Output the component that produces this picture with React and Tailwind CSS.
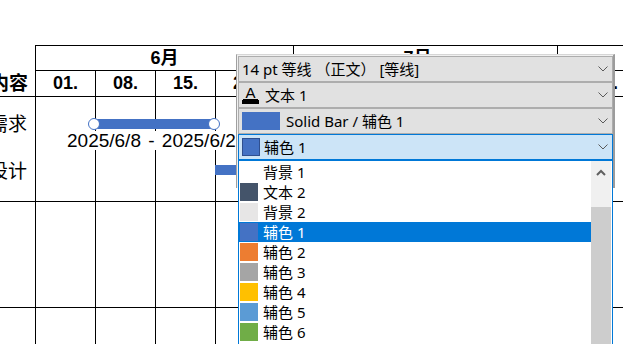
import React from 'react';

const weeks = ['01.', '08.', '15.', '22.', '29.', '06.', '13.', '20.', '27.', '03.'];

const items = [
  { name: '背景 1', c: null },
  { name: '文本 2', c: '#44546a' },
  { name: '背景 2', c: '#e7e6e6' },
  { name: '辅色 1', c: '#4472c4', sel: true },
  { name: '辅色 2', c: '#ed7d31' },
  { name: '辅色 3', c: '#a5a5a5' },
  { name: '辅色 4', c: '#ffc000' },
  { name: '辅色 5', c: '#5b9bd5' },
  { name: '辅色 6', c: '#70ad47' },
  { name: '背景 1', c: '#ffffff' },
];

function Chevron() {
  return (
    <svg width="10" height="6" viewBox="0 0 10 6" className="shrink-0">
      <path d="M0.5 0.5 L5 5 L9.5 0.5" stroke="#5a5a5a" strokeWidth="1" fill="none" />
    </svg>
  );
}

function Combo({ children, selected }) {
  return (
    <div
      className={
        selected
          ? 'flex items-center h-[26px] border border-[#0078d7] bg-[#cce4f7] pl-[3px] pr-[4px]'
          : 'flex items-center h-[26px] border border-[#adadad] bg-[#e1e1e1] pl-[3px] pr-[4px]'
      }
    >
      <div className="flex-1 flex items-center min-w-0 whitespace-nowrap">{children}</div>
      <Chevron />
    </div>
  );
}

function BodyCells() {
  return (
    <>
      <div className="w-[36px] shrink-0 border-r border-black" />
      {weeks.map((w, i) => (
        <div key={i} className="w-[60px] shrink-0 border-r border-black" />
      ))}
    </>
  );
}

export default function App() {
  return (
    <div className="relative w-[623px] h-[344px] overflow-hidden bg-white pt-[45px] font-['Liberation_Sans','Noto_Sans_CJK_SC',sans-serif] text-black">
      {/* Header */}
      <div className="flex border-b border-black">
        <div className="w-[35px] shrink-0 flex flex-col justify-end items-end">
          <div className="h-[25px] leading-[25px] text-[19px] font-bold whitespace-nowrap pr-[7px]">内容</div>
        </div>
        <div className="flex flex-col border-l border-t border-black">
          <div className="flex h-[24px]">
            <div className="w-[258px] shrink-0 border-r border-black flex items-center justify-center text-[18px] font-bold leading-[24px]">6月</div>
            <div className="w-[264px] shrink-0 border-r border-black flex items-center justify-center pr-[16px] text-[18px] font-bold leading-[24px]">7月</div>
            <div className="w-[200px] shrink-0 flex items-center justify-center text-[18px] font-bold">8月</div>
          </div>
          <div className="flex h-[26px] border-t border-black">
            {weeks.map((w, i) => (
              <div key={i} className="w-[60px] shrink-0 border-r border-black flex items-center justify-center text-[18px] font-bold leading-[25px]">
                {w}
              </div>
            ))}
          </div>
        </div>
      </div>

      {/* Body row 1 */}
      <div className="relative flex h-[105px] border-b border-black">
        <div className="absolute right-[596px] top-0 flex flex-col items-end pt-[16px] text-[19px] leading-[24px] whitespace-nowrap gap-[23px]">
          <div>需求</div>
          <div>设计</div>
        </div>
        <BodyCells />
        <div className="absolute left-[94px] top-[22px] w-[121px] h-[10px] bg-[#4472c4]" />
        <div className="absolute left-[88px] top-[21px] w-[12px] h-[12px] rounded-full border-[1.5px] border-[#4472c4] bg-white" />
        <div className="absolute left-[208px] top-[21px] w-[12px] h-[12px] rounded-full border-[1.5px] border-[#4472c4] bg-white" />
        <div className="absolute left-[64px] top-[34px] h-[19px] bg-white px-[3px] text-[19px] leading-[19px] whitespace-nowrap [word-spacing:2px]">
          2025/6/8 - 2025/6/21
        </div>
        <div className="absolute left-[215px] top-[68px] w-[120px] h-[10px] bg-[#4472c4]" />
      </div>

      {/* Body row 2 */}
      <div className="flex h-[106px] border-b border-black">
        <BodyCells />
      </div>
      {/* Body row 3 */}
      <div className="flex h-[60px]">
        <BodyCells />
      </div>

      {/* Format popup */}
      <div className="absolute left-[236px] top-[54px] w-[379px] h-[134px] bg-[#f0f0f0] border-l border-l-[#a0a0a0] border-t border-t-[#d6d6d6] border-r-2 border-r-[#9c9c9c] pt-[1px] pl-[1px] font-['Noto_Sans','Noto_Sans_CJK_SC',sans-serif] text-[15px] leading-[20px]">
        <div className="w-[375px] flex flex-col">
          <Combo>
            <span>14 pt 等线 （正文） [等线]</span>
          </Combo>
          <Combo>
            <span className="flex flex-col items-center w-[17px] mr-[6px]">
              <span className="text-[15px] leading-[13px] font-['Liberation_Sans',sans-serif] border-b border-black px-[2px]">A</span>
              <span className="w-[17px] h-[4px] bg-black" />
            </span>
            <span>文本 1</span>
          </Combo>
          <Combo>
            <span className="w-[38px] h-[18px] bg-[#4472c4] mr-[6px] shrink-0" />
            <span>Solid Bar / 辅色 1</span>
          </Combo>
          <Combo selected>
            <span className="w-[18px] h-[18px] bg-[#4472c4] border border-[#2f4f8f] mr-[4px] shrink-0" />
            <span>辅色 1</span>
          </Combo>
        </div>
      </div>

      {/* Dropdown list */}
      <div className="absolute left-[238px] top-[160px] w-[375px] h-[200px] border border-[#0078d7] bg-white flex font-['Noto_Sans','Noto_Sans_CJK_SC',sans-serif] text-[15px]">
        <div className="flex-1 flex flex-col pt-[1px]">
          {items.map((it, i) => (
            <div
              key={i}
              className={
                it.sel
                  ? 'flex items-center h-[20px] bg-[#0078d7] text-white'
                  : 'flex items-center h-[20px] text-black'
              }
            >
              <span
                className="ml-[1px] w-[18px] h-[18px] shrink-0"
                style={{ backgroundColor: it.c || 'transparent' }}
              />
              <span className="ml-[5px] leading-[20px] whitespace-nowrap">{it.name}</span>
            </div>
          ))}
        </div>
        <div className="w-[20px] flex flex-col bg-[#f0f0f0] mr-[1px]">
          <div className="h-[46px] flex justify-center pt-[8px]">
            <svg width="10" height="7" viewBox="0 0 10 7">
              <path d="M1 6 L5 2 L9 6" stroke="#606060" strokeWidth="2" fill="none" />
            </svg>
          </div>
          <div className="flex-1 bg-[#cdcdcd]" />
        </div>
      </div>
    </div>
  );
}
